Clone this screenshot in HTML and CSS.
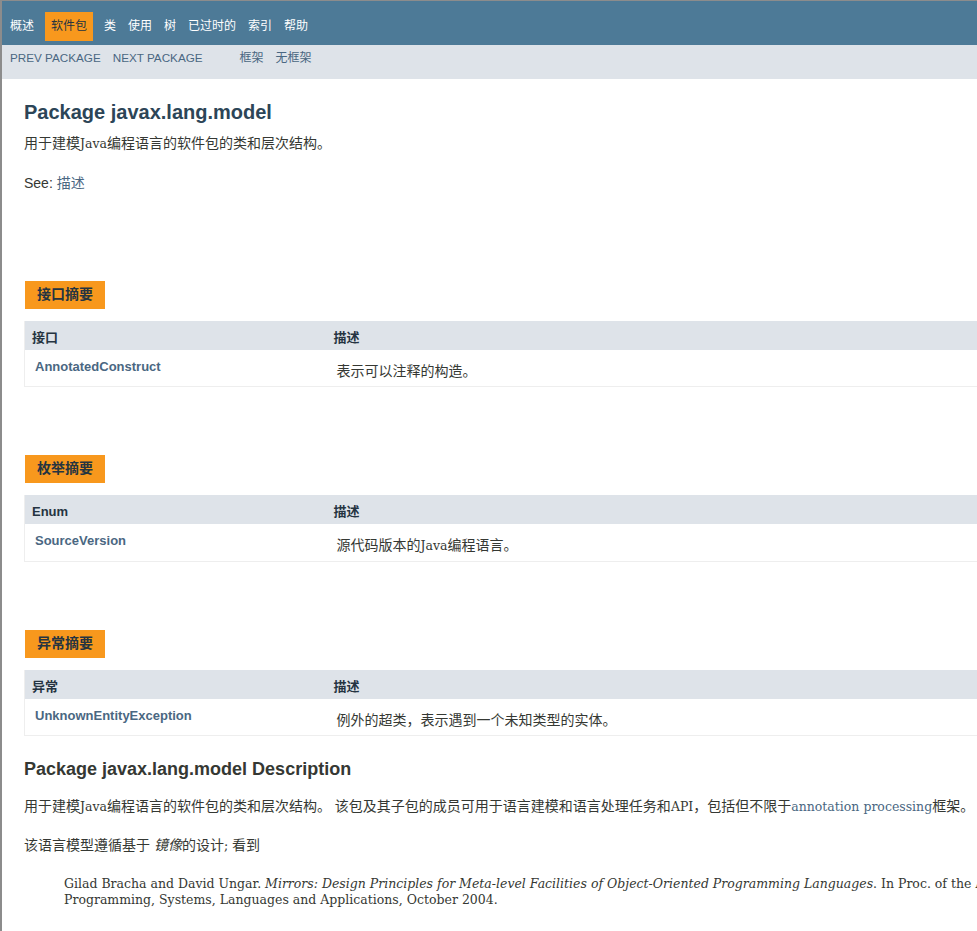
FILE: index.html
```html
<!DOCTYPE html>
<html lang="zh-CN">
  <head>
    <meta charset="UTF-8" />
    <meta name="viewport" content="width=device-width, initial-scale=1.0" />
    <title>javax.lang.model</title>
    <link rel="stylesheet" href="styles.css">
  </head>
  <body>
    <div class="page">
      <!-- 顶部导航 -->
      <div class="top-nav">
        <ul class="nav-list">
          <li><a href="#">概述</a></li>
          <li class="nav-current">软件包</li>
          <li>类</li>
          <li>使用</li>
          <li><a href="#">树</a></li>
          <li><a href="#">已过时的</a></li>
          <li><a href="#">索引</a></li>
          <li><a href="#">帮助</a></li>
        </ul>
      </div>
      <div class="sub-nav">
        <ul class="nav-list">
          <li>Prev Package</li>
          <li>Next Package</li>
        </ul>
        <ul class="nav-list frames">
          <li><a href="#">框架</a></li>
          <li><a href="#">无框架</a></li>
        </ul>
      </div>

      <div class="header">
        <h1 class="title">Package javax.lang.model</h1>
        <div class="block">用于建模<span class="en">Java</span>编程语言的软件包的类和层次结构。</div>
        <p class="see">See: <a href="#package.description">描述</a></p>
      </div>

      <div class="content">
        <div class="summary">
          <table>
            <caption><span>接口摘要</span></caption>
            <tr>
              <th class="col-first">接口</th>
              <th class="col-last">描述</th>
            </tr>
            <tr>
              <td class="col-first"><a href="#">AnnotatedConstruct</a></td>
              <td class="col-last"><div class="block">表示可以注释的构造。</div></td>
            </tr>
          </table>
        </div>

        <div class="summary">
          <table>
            <caption><span>枚举摘要</span></caption>
            <tr>
              <th class="col-first">Enum</th>
              <th class="col-last">描述</th>
            </tr>
            <tr>
              <td class="col-first"><a href="#">SourceVersion</a></td>
              <td class="col-last"><div class="block">源代码版本的<span class="en">Java</span>编程语言。</div></td>
            </tr>
          </table>
        </div>

        <div class="summary">
          <table>
            <caption><span>异常摘要</span></caption>
            <tr>
              <th class="col-first">异常</th>
              <th class="col-last">描述</th>
            </tr>
            <tr>
              <td class="col-first"><a href="#">UnknownEntityException</a></td>
              <td class="col-last"><div class="block">例外的超类，表示遇到一个未知类型的实体。</div></td>
            </tr>
          </table>
        </div>

        <a name="package.description"></a>
        <h2 class="desc-title">Package javax.lang.model Description</h2>
        <div class="block desc">
          <p>用于建模<span class="en">Java</span>编程语言的软件包的类和层次结构。 该包及其子包的成员可用于语言建模和语言处理任务和<span class="en">API</span>，包括但不限于<a class="en" href="#">annotation processing</a>框架。</p>
          <p>该语言模型遵循基于 <i>镜像</i>的设计<span class="en">; </span>看到</p>
          <blockquote>
            Gilad Bracha and David Ungar. <cite>Mirrors: Design Principles for Meta-level Facilities of Object-Oriented Programming Languages</cite>. In Proc. of the ACM Conf. on Object-Oriented Programming, Systems, Languages and Applications, October 2004.
          </blockquote>
          <p>特别地，该模型使得静态的语言结构之间的区别，如<span class="en">element</span>表示<code>java.util.Set</code>的定义，和<code>family</code>其可以与元素相关联，如原始类型<code>java.util.Set</code>，<code>java.util.Set&lt;String&gt;</code>和<code>java.util.Set&lt;T&gt;</code>。</p>
          <p>除非另有规定，在此包中的方法将抛出<code>NullPointerException</code>如果给定一个<code>null</code>参数。</p>
        </div>
      </div>
    </div>
  </body>
</html>
```

FILE: styles.css
```css
* {
  box-sizing: border-box;
  margin: 0;
  padding: 0;
}
html {
  overflow: hidden;
}
body {
  font-family: "Liberation Sans", Arial, "Noto Sans CJK SC", sans-serif;
  font-size: 14px;
  color: #353833;
  background-color: #fff;
}
a {
  color: #4a6782;
  text-decoration: none;
}
.page {
  width: 1256px;
  min-height: 100vh;
  border-top: 1px solid #8c8c8c;
  border-left: 2px solid #8c8c8c;
}

/* 导航条 */
.nav-list {
  display: flex;
  list-style: none;
}
.nav-list li {
  padding: 5px 6px;
  text-transform: uppercase;
}
.top-nav {
  height: 44px;
  padding: 11px 0 0 2px;
  background-color: #4d7a97;
  color: #fff;
  font-size: 12px;
  line-height: 19px;
}
.top-nav a {
  color: #fff;
}
.top-nav .nav-current {
  margin: 0 5px;
  background-color: #f8981d;
  color: #253441;
}
.sub-nav {
  display: flex;
  height: 34px;
  padding-left: 2px;
  background-color: #dee3e9;
  color: #4a6782;
  font-size: 11.7px;
  line-height: 16px;
}
.sub-nav .nav-list {
  margin-right: 25px;
}
.sub-nav .frames {
  font-size: 12px;
}

/* 标题 */
.header,
.content {
  padding: 0 24px 0 22px;
}
.title {
  margin-top: 21px;
  font-size: 20px;
  line-height: 24px;
  color: #2c4557;
}
.block {
  line-height: 20px;
}
.header .block {
  margin-top: 9px;
}
.see {
  margin-top: 19px;
  line-height: 20px;
}
.en {
  font-family: "DejaVu Serif", serif;
  font-size: 12.5px;
}

/* 摘要表格 */
.summary {
  margin-top: 58px;
}
.summary:first-child {
  margin-top: 78px;
}
table {
  width: 100%;
  border-spacing: 0;
  border-left: 1px solid #eee;
  border-right: 1px solid #eee;
  border-bottom: 1px solid #eee;
}
caption {
  padding: 10px 0 12px 1px;
  text-align: left;
  color: #253441;
  font-weight: bold;
}
caption span {
  display: block;
  width: max-content;
  height: 28px;
  padding: 5px 12px 7px;
  line-height: 16px;
  background-color: #f8981d;
}
th {
  padding: 8px 3px 3px 7px;
  background-color: #dee3e9;
  text-align: left;
  font-size: 13px;
  line-height: 18px;
  color: #253441;
}
th.col-first,
td.col-first {
  width: 25%;
}
td {
  padding: 8px 3px 3px 10px;
  font-size: 13px;
  vertical-align: top;
}
td.col-first {
  white-space: nowrap;
  line-height: 18px;
}
td.col-first a {
  font-weight: bold;
}
td .block {
  margin: 3px 10px 2px 0;
  font-size: 14px;
}

/* 说明 */
.desc-title {
  margin-top: 22px;
  font-size: 18px;
  line-height: 22px;
}
.desc p {
  margin: 16px 0 18px;
}
.desc p + p {
  margin-top: 18px;
}
.desc blockquote {
  margin: 20px 40px;
  font-family: "DejaVu Serif", serif;
  font-size: 12.5px;
  line-height: 16px;
}
.desc code {
  font-family: "DejaVu Sans Mono", monospace;
  font-size: 13px;
}
```
